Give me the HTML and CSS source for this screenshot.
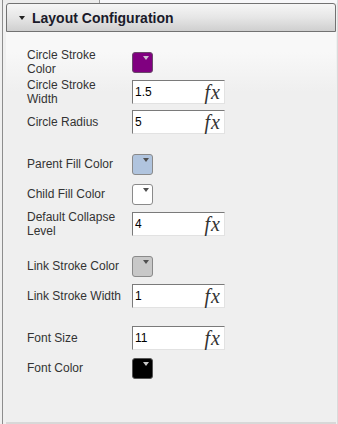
FILE: index.html
```html
<!DOCTYPE html>
<html lang="en">
<head>
    <meta charset="UTF-8">
    <meta name="viewport" content="width=device-width, initial-scale=1.0">
    <title>Layout Configuration</title>
    <link rel="stylesheet" href="styles.css">
</head>
<body>
    <div class="shell">
        <div class="tabs">
            <span class="tab"></span>
            <span class="tab tab-active"></span>
        </div>

        <div class="panel">
            <div class="panel-header">
                <span class="caret"></span>
                <span class="panel-title">Layout Configuration</span>
            </div>

            <div class="panel-body">
                <div class="section">
                    <div class="row">
                        <label class="row-label">Circle Stroke Color</label>
                        <div class="swatch swatch-purple"></div>
                    </div>
                    <div class="row">
                        <label class="row-label">Circle Stroke Width</label>
                        <div class="field"><input type="text" value="1.5"><span class="fx">fx</span></div>
                    </div>
                    <div class="row">
                        <label class="row-label">Circle Radius</label>
                        <div class="field"><input type="text" value="5"><span class="fx">fx</span></div>
                    </div>
                </div>

                <div class="section">
                    <div class="row">
                        <label class="row-label">Parent Fill Color</label>
                        <div class="swatch swatch-blue"></div>
                    </div>
                    <div class="row">
                        <label class="row-label">Child Fill Color</label>
                        <div class="swatch swatch-white"></div>
                    </div>
                    <div class="row">
                        <label class="row-label">Default Collapse Level</label>
                        <div class="field"><input type="text" value="4"><span class="fx">fx</span></div>
                    </div>
                </div>

                <div class="section">
                    <div class="row">
                        <label class="row-label">Link Stroke Color</label>
                        <div class="swatch swatch-gray"></div>
                    </div>
                    <div class="row">
                        <label class="row-label">Link Stroke Width</label>
                        <div class="field"><input type="text" value="1"><span class="fx">fx</span></div>
                    </div>
                </div>

                <div class="section">
                    <div class="row">
                        <label class="row-label">Font Size</label>
                        <div class="field"><input type="text" value="11"><span class="fx">fx</span></div>
                    </div>
                    <div class="row">
                        <label class="row-label">Font Color</label>
                        <div class="swatch swatch-black"></div>
                    </div>
                </div>
            </div>
        </div>
    </div>
</body>
</html>
```

FILE: styles.css
```css
* {
    margin: 0;
    padding: 0;
    box-sizing: border-box;
}

body {
    font-family: 'Liberation Sans', Arial, sans-serif;
    background: #f0f0f0;
    width: 338px;
    height: 424px;
    overflow: hidden;
}

.shell {
    margin-left: 2px;
    height: 424px;
    border-left: 1px solid #8d8d8d;
    border-right: 1px solid #dadada;
    display: flex;
    flex-direction: column;
}

.tabs {
    height: 3px;
    display: flex;
}

.tab {
    width: 97px;
    background: #ececec;
    border-right: 1px solid #9a9a9a;
}

.tab-active {
    flex: 1;
    width: auto;
    background: #f7f7f9;
    border-right: none;
}

.panel {
    flex: 1;
    margin: 0 1px 0 3px;
    display: flex;
    flex-direction: column;
    border-bottom: 2px solid #d8d8d8;
}

.panel-header {
    height: 29px;
    border: 1px solid #727272;
    border-radius: 3px 3px 0 0;
    background: linear-gradient(#f6f6f6 0%, #e6e6e6 50%, #cfcfcf 100%);
    display: flex;
    align-items: center;
    padding-left: 12px;
    gap: 7px;
}

.caret {
    width: 0;
    height: 0;
    border-left: 3.5px solid transparent;
    border-right: 3.5px solid transparent;
    border-top: 4px solid #222;
}

.panel-title {
    font-size: 14px;
    font-weight: bold;
    color: #1a1a2a;
}

.panel-body {
    flex: 1;
    padding: 16px 0 0 21px;
    background: linear-gradient(#f8f8f8 0px, #f8f8f8 20px, #efefef 60px);
    display: flex;
    flex-direction: column;
    gap: 14px;
}

.section {
    display: flex;
    flex-direction: column;
    gap: 2px;
}

.row {
    height: 28px;
    display: grid;
    grid-template-columns: 105px auto;
    align-items: center;
}

.row-label {
    width: 98px;
    font-size: 12px;
    line-height: 14px;
    color: #333;
}

.field {
    width: 93px;
    height: 24px;
    background: white;
    border: 1px solid;
    border-color: #7a7a7a #e2e2e2 #e2e2e2 #7a7a7a;
    display: flex;
    align-items: center;
    padding: 0 3px 0 2px;
}

.field input {
    flex: 1;
    min-width: 0;
    border: none;
    outline: none;
    background: transparent;
    font-family: 'Liberation Sans', Arial, sans-serif;
    font-size: 12px;
    color: #000;
}

.fx {
    font-family: 'Liberation Serif', 'Times New Roman', serif;
    font-style: italic;
    font-size: 20px;
    line-height: 18px;
    letter-spacing: 1px;
    color: #333;
}

.swatch {
    position: relative;
    width: 21px;
    height: 21px;
    border: 1px solid #8a8a8a;
    border-radius: 3px;
}

.swatch::after {
    content: '';
    position: absolute;
    top: 3px;
    right: 3px;
    border-left: 3.5px solid transparent;
    border-right: 3.5px solid transparent;
    border-top: 4px solid #505050;
}

.swatch-purple { background: #800080; border-color: #6a4a6a; }
.swatch-purple::after { border-top-color: #d0c0d0; }

.swatch-blue { background: #b0c4de; }

.swatch-white { background: #fff; }

.swatch-gray { background: #c8c8c8; }

.swatch-black { background: #000; border-color: #555; }
.swatch-black::after { border-top-color: #c8c8c8; }
```
